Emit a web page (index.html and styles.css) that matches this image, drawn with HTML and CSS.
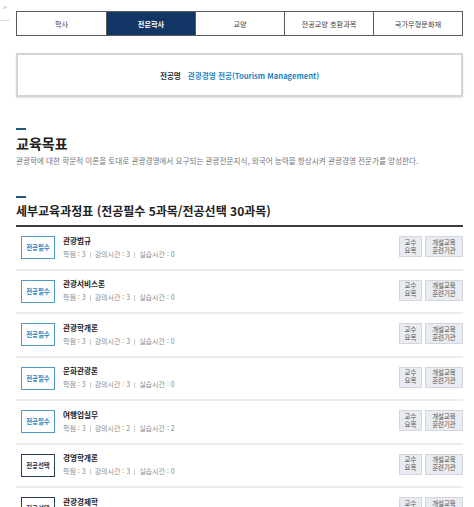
FILE: index.html
```html
<!DOCTYPE html>
<html lang="ko">
<head>
<meta charset="utf-8">
<link rel="stylesheet" href="styles.css">
</head>
<body>
<div class="crumb"><span class="crumb-arrow">&gt;</span><span class="crumb-line"></span></div>
<div class="wrap">
  <div class="tabs">
    <div class="tab">학사</div>
    <div class="tab active">전문학사</div>
    <div class="tab">교양</div>
    <div class="tab">전공교양 호환과목</div>
    <div class="tab">국가무형문화재</div>
  </div>

  <div class="major">
    <span class="major-label">전공명</span>
    <span class="major-name">관광경영 전공(Tourism Management)</span>
  </div>

  <div class="section s1">
    <div class="dash"></div>
    <h2 class="h-title">교육목표</h2>
    <p class="desc">관광학에 대한 학문적 이론을 토대로 관광경영에서 요구되는 관광전문지식, 외국어 능력을 향상시켜 관광경영 전문가를 양성한다.</p>
  </div>

  <div class="section s2">
    <div class="dash"></div>
    <h2 class="h-title h2">세부교육과정표 (전공필수 5과목/전공선택 30과목)</h2>
  </div>

  <div class="list">
    <div class="row">
      <div class="badge req">전공필수</div>
      <div class="info"><div class="name">관광법규</div><div class="meta">학점 : 3<i></i>강의시간 : 3<i></i>실습시간 : 0</div></div>
      <div class="btns"><div class="btn b1">교수<br>요목</div><div class="btn b2">개설교육<br>훈련기관</div></div>
    </div>
    <div class="row">
      <div class="badge req">전공필수</div>
      <div class="info"><div class="name">관광서비스론</div><div class="meta">학점 : 3<i></i>강의시간 : 3<i></i>실습시간 : 0</div></div>
      <div class="btns"><div class="btn b1">교수<br>요목</div><div class="btn b2">개설교육<br>훈련기관</div></div>
    </div>
    <div class="row">
      <div class="badge req">전공필수</div>
      <div class="info"><div class="name">관광학개론</div><div class="meta">학점 : 3<i></i>강의시간 : 3<i></i>실습시간 : 0</div></div>
      <div class="btns"><div class="btn b1">교수<br>요목</div><div class="btn b2">개설교육<br>훈련기관</div></div>
    </div>
    <div class="row">
      <div class="badge req">전공필수</div>
      <div class="info"><div class="name">문화관광론</div><div class="meta">학점 : 3<i></i>강의시간 : 3<i></i>실습시간 : 0</div></div>
      <div class="btns"><div class="btn b1">교수<br>요목</div><div class="btn b2">개설교육<br>훈련기관</div></div>
    </div>
    <div class="row">
      <div class="badge req">전공필수</div>
      <div class="info"><div class="name">여행업실무</div><div class="meta">학점 : 3<i></i>강의시간 : 2<i></i>실습시간 : 2</div></div>
      <div class="btns"><div class="btn b1">교수<br>요목</div><div class="btn b2">개설교육<br>훈련기관</div></div>
    </div>
    <div class="row">
      <div class="badge sel">전공선택</div>
      <div class="info"><div class="name">경영학개론</div><div class="meta">학점 : 3<i></i>강의시간 : 3<i></i>실습시간 : 0</div></div>
      <div class="btns"><div class="btn b1">교수<br>요목</div><div class="btn b2">개설교육<br>훈련기관</div></div>
    </div>
    <div class="row">
      <div class="badge sel">전공선택</div>
      <div class="info"><div class="name">관광경제학</div><div class="meta">학점 : 3<i></i>강의시간 : 3<i></i>실습시간 : 0</div></div>
      <div class="btns"><div class="btn b1">교수<br>요목</div><div class="btn b2">개설교육<br>훈련기관</div></div>
    </div>
  </div>
</div>
</body>
</html>
```

FILE: styles.css
```css
html, body {
  margin: 0;
  padding: 0;
  background: #ffffff;
}
body {
  font-family: "Noto Sans CJK KR", "Noto Sans", sans-serif;
  color: #333;
  position: relative;
  overflow: hidden;
  height: 507px;
}
.crumb {
  position: absolute;
  left: 0;
  top: 0;
  width: 12px;
  height: 24px;
}
.crumb-arrow {
  position: absolute;
  left: 3px;
  top: 2px;
  font-size: 7px;
  color: #aaa;
  line-height: 10px;
}
.crumb-line {
  position: absolute;
  left: 0;
  top: 20px;
  width: 10px;
  height: 1px;
  background: #ddd;
}
.wrap {
  padding: 11px 11px 0 16px;
}
.tabs {
  display: grid;
  grid-template-columns: repeat(5, 1fr);
  height: 25px;
  border: 1px solid #5a5a5a;
  box-sizing: border-box;
}
.tab {
  display: flex;
  align-items: center;
  justify-content: center;
  font-size: 7.2px;
  color: #444;
  border-left: 1px solid #5a5a5a;
}
.tab:first-child {
  border-left: none;
}
.tab.active {
  background: #123665;
  color: #fff;
  font-weight: bold;
}
.major {
  margin-top: 17px;
  height: 44px;
  box-sizing: border-box;
  border: 2px solid #d4d4d4;
  box-shadow: 0 1px 2px rgba(0,0,0,0.12);
  display: flex;
  align-items: center;
  justify-content: center;
  gap: 7px;
  font-size: 7.6px;
  font-weight: bold;
}
.major-label {
  color: #333;
}
.major-name {
  color: #1b86c4;
}
.section {
  display: flex;
  flex-direction: column;
  align-items: flex-start;
}
.s1 {
  margin-top: 31px;
}
.s2 {
  margin-top: 30px;
}
.dash {
  width: 10px;
  height: 2px;
  background: #1c5b7e;
}
.h-title {
  margin: 4px 0 0 0;
  font-size: 14px;
  line-height: 18px;
  font-weight: bold;
  color: #222;
}
.h-title.h2 {
  font-size: 12px;
}
.desc {
  margin: 4px 0 0 0;
  font-size: 7.6px;
  line-height: 10px;
  color: #777;
  white-space: nowrap;
}
.list {
  margin-top: 5px;
  border-top: 2px solid #3c3c3c;
}
.row {
  height: 43.5px;
  box-sizing: border-box;
  border-bottom: 2px solid #ececec;
  display: flex;
  align-items: center;
  padding: 0 0 0 5px;
}
.badge {
  width: 34px;
  height: 23px;
  box-sizing: border-box;
  border: 1px solid;
  display: flex;
  align-items: center;
  justify-content: center;
  font-size: 6.4px;
  font-weight: bold;
  flex: none;
}
.badge.req {
  border-color: #4d9ac9;
  color: #2484c0;
}
.badge.sel {
  border-color: #2a3f5c;
  color: #233550;
}
.info {
  margin-left: 8px;
  flex: 1;
  margin-top: -1px;
}
.name {
  font-size: 7.6px;
  font-weight: bold;
  color: #222;
  line-height: 11px;
}
.meta {
  font-size: 7px;
  color: #8a8a8a;
  line-height: 11px;
  margin-top: 3px;
}
.meta i {
  display: inline-block;
  width: 1px;
  height: 6px;
  background: #ccc;
  margin: 0 4px;
  vertical-align: -1px;
}
.btns {
  display: flex;
  gap: 3px;
  margin-top: -2px;
}
.btn {
  height: 21px;
  box-sizing: border-box;
  background: #e8ebef;
  border: 1px solid #d3d7dd;
  display: flex;
  align-items: center;
  justify-content: center;
  text-align: center;
  font-size: 6.4px;
  line-height: 8px;
  color: #555;
}
.b1 {
  width: 23px;
}
.b2 {
  width: 38px;
}
```
